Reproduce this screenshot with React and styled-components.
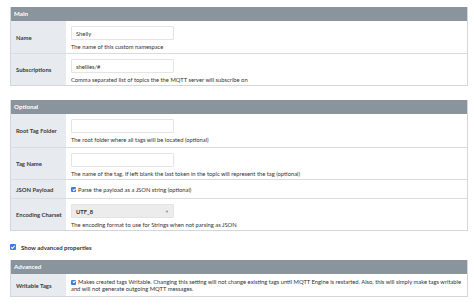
import React from "react";
import styled, { createGlobalStyle } from "styled-components";

const Global = createGlobalStyle`
  html, body { margin: 0; padding: 0; background: #fff; }
  body { font-family: Lato, "Liberation Sans", sans-serif; color: #333; }
`;

const Page = styled.div`
  padding: 7px 6px 0 10px;
  width: 474px;
  height: 305px;
  box-sizing: border-box;
  overflow: hidden;
`;

const Section = styled.div`
  border: 1px solid #d3d7db;
  border-top: none;
  margin-bottom: ${(p) => p.$mb || 0}px;
`;

const Header = styled.div`
  height: 14px;
  background: #8a949d;
  color: #fff;
  font-weight: 700;
  font-size: 6.2px;
  line-height: 14px;
  padding-left: 3px;
`;

const Row = styled.div`
  display: grid;
  grid-template-columns: 55px 1fr;
  min-height: ${(p) => p.$h}px;
  border-top: ${(p) => (p.$first ? "none" : "1px solid #d8dcdf")};
  box-sizing: border-box;
`;

const Label = styled.div`
  background: #e7ebf0;
  font-weight: 700;
  font-size: 5.9px;
  display: flex;
  align-items: center;
  padding-left: 5px;
  color: #3a3a3a;
`;

const Field = styled.div`
  display: flex;
  flex-direction: column;
  justify-content: ${(p) => (p.$center ? "center" : "flex-start")};
  padding: ${(p) => (p.$center ? "0 4px 0 5px" : "5px 4px 0 5px")};
`;

const Input = styled.div`
  width: 103px;
  height: 14px;
  box-sizing: border-box;
  border: 1px solid #e4e4e4;
  border-radius: 1px;
  background: ${(p) => (p.$select ? "#ececec" : "#fff")};
  font-size: 5.8px;
  color: #333;
  display: flex;
  align-items: center;
  justify-content: space-between;
  padding: 0 4px;
  font-weight: ${(p) => (p.$select ? 700 : 400)};
`;

const Arrow = styled.span`
  font-size: 4px;
  color: #888;
`;

const Help = styled.div`
  font-size: 5.8px;
  line-height: 7px;
  margin-top: 2.5px;
  color: #333;
`;

const CheckText = styled.div`
  font-size: 5.8px;
  line-height: 7px;
  color: #333;
`;

const Box = styled.span`
  display: inline-block;
  width: 5px;
  height: 5px;
  background: #3b7ddd;
  border-radius: 1px;
  vertical-align: -0.5px;
  margin-right: 2px;
  position: relative;
  &::after {
    content: "";
    position: absolute;
    left: 1.6px;
    top: 0.5px;
    width: 1.2px;
    height: 2.4px;
    border: solid #fff;
    border-width: 0 0.8px 0.8px 0;
    transform: rotate(45deg);
  }
`;

const Advanced = styled.div`
  display: flex;
  align-items: center;
  height: 29px;
  padding-top: 3px;
  box-sizing: border-box;
  font-size: 6px;
  font-weight: 700;
  color: #333;
`;

const BigBox = styled(Box)`
  width: 6px;
  height: 6px;
  margin-right: 5px;
  &::after {
    left: 2px;
    top: 0.6px;
    width: 1.4px;
    height: 2.8px;
  }
`;

function TextRow({ label, value, help, first, h = 32 }) {
  return (
    <Row $first={first} $h={h}>
      <Label>{label}</Label>
      <Field>
        <Input>{value}</Input>
        <Help>{help}</Help>
      </Field>
    </Row>
  );
}

export default function App() {
  return (
    <>
      <Global />
      <Page>
        <Section $mb={14}>
          <Header>Main</Header>
          <TextRow first label="Name" value="Shelly" help="The name of this custom namespace" />
          <TextRow
            label="Subscriptions"
            value="shellies/#"
            help="Comma separated list of topics the the MQTT server will subscribe on"
          />
        </Section>
        <Section>
          <Header>Optional</Header>
          <TextRow first h={33} label="Root Tag Folder" value="" help="The root folder where all tags will be located (optional)" />
          <TextRow
            label="Tag Name"
            value=""
            help="The name of the tag. If left blank the last token in the topic will represent the tag (optional)"
          />
          <Row $h={19}>
            <Label>JSON Payload</Label>
            <Field $center>
              <CheckText>
                <Box />
                Parse the payload as a JSON string (optional)
              </CheckText>
            </Field>
          </Row>
          <Row $h={32}>
            <Label>Encoding Charset</Label>
            <Field>
              <Input $select>
                UTF_8<Arrow>▼</Arrow>
              </Input>
              <Help>The encoding format to use for Strings when not parsing as JSON</Help>
            </Field>
          </Row>
        </Section>
        <Advanced>
          <BigBox />
          Show advanced properties
        </Advanced>
        <Section>
          <Header>Advanced</Header>
          <Row $first $h={22}>
            <Label>Writable Tags</Label>
            <Field $center>
              <CheckText>
                <Box />
                Makes created tags Writable. Changing this setting will not change existing tags until MQTT Engine is
                restarted. Also, this will simply make tags writable
                <br />
                and will not generate outgoing MQTT messages.
              </CheckText>
            </Field>
          </Row>
        </Section>
      </Page>
    </>
  );
}
